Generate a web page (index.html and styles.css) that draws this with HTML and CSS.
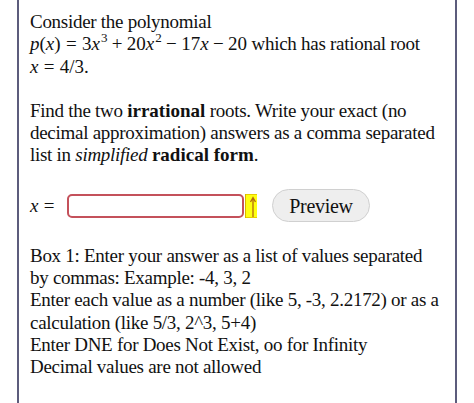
FILE: index.html
```html
<!DOCTYPE html>
<html>
<head>
<meta charset="utf-8">
<link rel="stylesheet" href="styles.css">
</head>
<body>
<div class="card">
  <p class="para">Consider the polynomial<br>
  <span class="m"><i>p</i>(<i>x</i>)<span class="rel">=</span>3<i>x</i><sup>3</sup><span class="bin">+</span>20<i>x</i><sup>2</sup><span class="bin">−</span>17<i>x</i><span class="bin">−</span>20</span> which has rational root<br>
  <span class="m"><i>x</i><span class="rel">=</span>4/3</span>.</p>
  <p class="para">Find the two <b>irrational</b> roots. Write your exact (no decimal approximation) answers as a comma separated list in <i>simplified</i> <b>radical form</b>.</p>
  <div class="answer">
    <span class="m lbl"><i>x</i><span class="rel">=</span></span>
    <span class="field"></span>
    <span class="flag"><svg class="arrow" width="12" height="24" viewBox="0 0 12 24"><path d="M8 23 V4 M5.5 8 L8 3.5 L10.5 8" fill="none" stroke="#b36a12" stroke-width="1.3"/></svg></span>
    <span class="preview">Preview</span>
  </div>
  <p class="para">Box 1: Enter your answer as a list of values separated by commas: Example: -4, 3, 2<br>
  Enter each value as a number (like 5, -3, 2.2172) or as a calculation (like 5/3, 2^3, 5+4)<br>
  Enter DNE for Does Not Exist, oo for Infinity<br>
  Decimal values are not allowed</p>
</div>
</body>
</html>
```
FILE: styles.css
```css
html, body {
  margin: 0;
  padding: 0;
  background: #ffffff;
}
body {
  font-family: "Liberation Serif", "Times New Roman", serif;
  font-size: 19px;
  letter-spacing: -0.28px;
  line-height: 22.3px;
  color: #111111;
}
.card {
  margin-left: 17px;
  width: 440px;
  min-height: 403px;
  box-sizing: border-box;
  border-left: 2px solid #5c5c7c;
  border-right: 2px solid #5c5c7c;
  padding: 11px 14px 0 11px;
}
.para {
  margin: 0 0 22px 0;
}
.para b {
  letter-spacing: 0;
}
.m {
  font-family: "Liberation Serif", "DejaVu Serif", serif;
  letter-spacing: 0;
}
.m i {
  font-family: "Liberation Serif", "DejaVu Serif", serif;
  font-style: italic;
}
.m sup {
  font-size: 13px;
  line-height: 0;
  vertical-align: 8px;
  margin-left: 1px;
}
.rel {
  margin: 0 0.28em;
}
.bin {
  margin: 0 0.23em;
}
.answer {
  display: flex;
  align-items: center;
  height: 34px;
  margin: 0 0 22px 0;
}
.lbl {
  width: 37px;
  flex: none;
}
.lbl .rel {
  margin-right: 0;
}
.field {
  flex: none;
  width: 173px;
  height: 20px;
  border: 2px solid #c4515b;
  border-radius: 5px;
  background: #ffffff;
}
.flag {
  flex: none;
  display: flex;
  width: 12px;
  height: 24px;
  margin-left: 1px;
  background: #ffff10;
  box-shadow: inset 1px 0 0 #d9b400, inset 0 1px 0 #e6cc00, inset 0 -1px 0 #e6cc00;
}
.arrow {
  display: block;
}
.preview {
  flex: none;
  margin-left: 15px;
  width: 96px;
  height: 31px;
  border: 1px solid #d0d0d0;
  border-radius: 17px;
  background: #eeeeee;
  display: flex;
  align-items: center;
  justify-content: center;
  font-size: 20px;
}
```
